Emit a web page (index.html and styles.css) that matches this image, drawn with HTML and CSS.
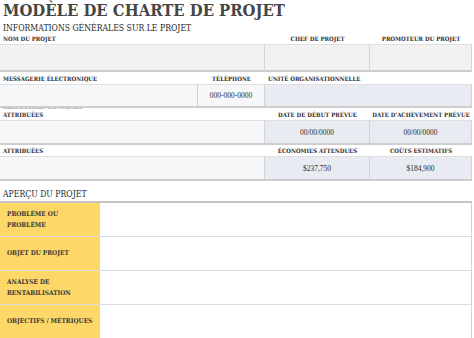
FILE: index.html
```html
<!DOCTYPE html>
<html lang="fr">
<head>
<meta charset="utf-8">
<meta name="format-detection" content="telephone=no">
<title>Modèle de charte de projet</title>
<link rel="stylesheet" href="styles.css">
</head>
<body>
<div class="page">
  <h1 class="title">MODÈLE DE CHARTE DE PROJET</h1>
  <h2 class="section">INFORMATIONS GÉNÉRALES SUR LE PROJET</h2>
  <div class="info">
    <div class="lbl span2">NOM DU PROJET</div>
    <div class="lbl c">CHEF DE PROJET</div>
    <div class="lbl c">PROMOTEUR DU PROJET</div>
    <div class="cell gray span2"></div>
    <div class="cell gray"></div>
    <div class="cell gray"></div>

    <div class="lbl">MESSAGERIE ÉLECTRONIQUE</div>
    <div class="lbl c">TÉLÉPHONE</div>
    <div class="lbl span2">UNITÉ ORGANISATIONNELLE</div>
    <div class="cell light"></div>
    <div class="cell light"><span class="v">000-000-0000</span></div>
    <div class="cell blue span2"></div>

    <div class="lbl clip span2"><span>RESSOURCES HUMAINES</span><span>ATTRIBUÉES</span></div>
    <div class="lbl c">DATE DE DÉBUT PRÉVUE</div>
    <div class="lbl c">DATE D'ACHÈVEMENT PRÉVUE</div>
    <div class="cell light span2"></div>
    <div class="cell blue"><span class="v">00/00/0000</span></div>
    <div class="cell blue"><span class="v">00/00/0000</span></div>

    <div class="lbl clip span2"><span>RESSOURCES FINANCIÈRES</span><span>ATTRIBUÉES</span></div>
    <div class="lbl c">ÉCONOMIES ATTENDUES</div>
    <div class="lbl c">COÛTS ESTIMATIFS</div>
    <div class="cell light span2"></div>
    <div class="cell blue"><span class="v">$237,750</span></div>
    <div class="cell blue"><span class="v">$184,900</span></div>
  </div>
  <h2 class="section overview-title">APERÇU DU PROJET</h2>
  <div class="overview">
    <div class="row"><div class="key">PROBLÈME OU<br>PROBLÈME</div><div class="val"></div></div>
    <div class="row"><div class="key">OBJET DU PROJET</div><div class="val"></div></div>
    <div class="row"><div class="key">ANALYSE DE<br>RENTABILISATION</div><div class="val"></div></div>
    <div class="row"><div class="key">OBJECTIFS / MÉTRIQUES</div><div class="val"></div></div>
  </div>
</div>
</body>
</html>
```
FILE: styles.css
```css
html, body {
  margin: 0;
  padding: 0;
  background: #ffffff;
}
body {
  font-family: "DejaVu Serif", "Liberation Serif", serif;
  font-stretch: condensed;
  color: #333333;
}
.page {
  width: 472px;
  overflow: hidden;
  height: 338px;
}
.title {
  margin: 1px 0 0 3px;
  font-size: 16.5px;
  line-height: 20px;
  font-weight: bold;
  color: #454545;
  white-space: nowrap;
}
.section {
  margin: 0 0 0 3px;
  font-size: 8.6px;
  line-height: 14px;
  font-weight: normal;
  color: #262626;
  white-space: nowrap;
}
.info {
  display: grid;
  grid-template-columns: 198px 67px 105px 102px;
  grid-template-rows: 9px 28px 12px 24px 12px 25px 11px 25px;
}
.span2 {
  grid-column: span 2;
}
.lbl {
  font-size: 6px;
  font-weight: bold;
  line-height: 8px;
  color: #2e2e2e;
  padding: 0 3px 1px;
  display: flex;
  align-items: flex-end;
  white-space: nowrap;
}
.lbl.c {
  justify-content: center;
}
.lbl.clip {
  flex-direction: column;
  justify-content: flex-end;
  align-items: flex-start;
  overflow: hidden;
}
.lbl.clip span:first-child {
  color: #9a9a9a;
}
.cell {
  border-top: 1px solid #e0e0e0;
  border-right: 1px solid #d3d3d3;
  border-bottom: 2px solid #cdcdcd;
  display: flex;
  align-items: center;
  justify-content: center;
}
.v {
  font-family: "Liberation Serif", serif;
  font-size: 7.5px;
  color: #2e2e2e;
}
.gray {
  background: #f2f2f2;
}
.light {
  background: #f6f7f9;
}
.blue {
  background: #e8ebf2;
}
.overview-title {
  margin-top: 7px;
  line-height: 13px;
}
.overview {
  border-top: 2px solid #c4c4c4;
  border-right: 1px solid #d3d3d3;
  display: flex;
  flex-direction: column;
}
.row {
  display: flex;
  height: 33px;
  border-bottom: 1px solid #dcdcdc;
}
.key {
  width: 93px;
  background: #fdd767;
  padding: 0 0 0 7px;
  display: flex;
  align-items: center;
  font-size: 6.5px;
  line-height: 11px;
  font-weight: bold;
  color: #3a3a3a;
}
.val {
  flex: 1;
  background: #ffffff;
}
```
